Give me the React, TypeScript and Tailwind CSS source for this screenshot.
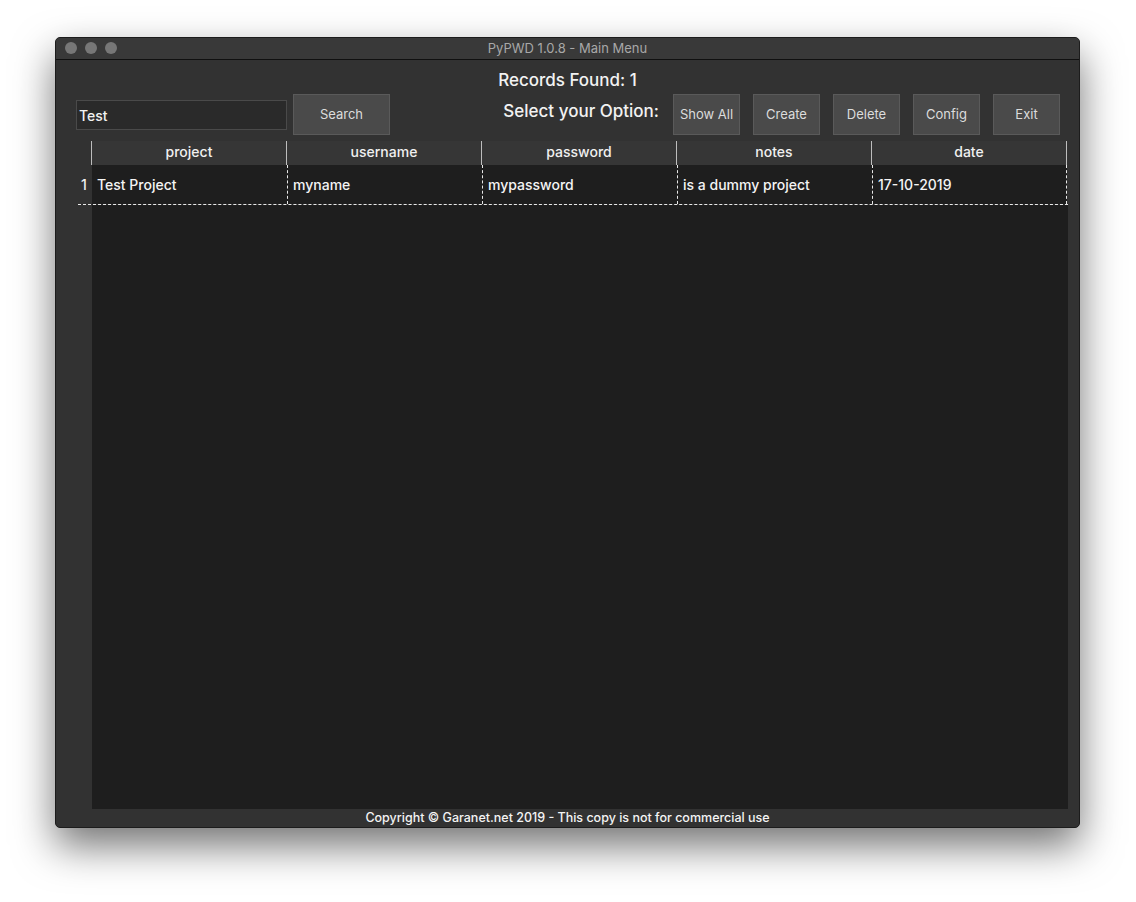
import React from "react";

const COLUMNS = ["project", "username", "password", "notes", "date"];
const ROW = ["Test Project", "myname", "mypassword", "is a dummy project", "17-10-2019"];
const OPTIONS = ["Show All", "Create", "Delete", "Config", "Exit"];

const font = { fontFamily: "Inter, 'Noto Sans', 'Liberation Sans', sans-serif" };

export default function App() {
  const btn =
    "flex h-[41px] items-center justify-center border border-[#5a5a5a] bg-[#4a4a4a] text-[13px] text-[#dcdcdc]";

  return (
    <div className="min-h-screen bg-white pl-[55px] pt-[37px]" style={font}>
      <div className="flex h-[791px] w-[1025px] flex-col overflow-hidden rounded-[5px] border border-[#1c1c1c] bg-[#323232] shadow-[0_18px_40px_rgba(0,0,0,0.55)]">
        {/* title bar */}
        <div className="relative flex h-[22px] shrink-0 items-center justify-center border-b border-[#101010] bg-[#393939]">
          <div className="absolute left-[9px] top-[4px] flex gap-[8px]">
            <span className="h-[12px] w-[12px] rounded-full bg-[#777777]" />
            <span className="h-[12px] w-[12px] rounded-full bg-[#777777]" />
            <span className="h-[12px] w-[12px] rounded-full bg-[#777777]" />
          </div>
          <span className="text-[13px] text-[#a8a8a8]">PyPWD 1.0.8 - Main Menu</span>
        </div>

        {/* records */}
        <div className="flex h-[34px] shrink-0 items-center justify-center pt-[8px] text-[17px] font-medium text-[#f2f2f2]">
          Records Found: 1
        </div>

        {/* controls */}
        <div className="flex h-[42px] shrink-0 items-start pl-[20px] pr-[19px]">
          <div className="mt-[6px] flex h-[30px] w-[211px] items-center border border-[#4a4a4a] bg-[#2a2a2a] pl-[2px] pt-[1px] text-[14px] font-medium text-[#f2f2f2]">
            Test
          </div>
          <div className={`${btn} ml-[6px] w-[97px]`}>Search</div>
          <div className="ml-auto mr-[14px] pt-[5px] text-[17px] font-medium text-[#f2f2f2]">
            Select your Option:
          </div>
          <div className="flex gap-[13px]">
            {OPTIONS.map((o) => (
              <div key={o} className={`${btn} w-[67px]`}>
                {o}
              </div>
            ))}
          </div>
        </div>

        {/* table */}
        <div className="ml-[22px] mt-[5px] flex w-[990px] flex-1 flex-col">
          <div className="flex h-[24px] shrink-0">
            <div className="w-[14px] border-r border-[#bdbdbd]" />
            {COLUMNS.map((c) => (
              <div
                key={c}
                className="flex w-[195px] items-center justify-center border-r border-[#bdbdbd] bg-[#363636] pb-[3px] text-[14px] font-medium text-[#f0f0f0]"
              >
                {c}
              </div>
            ))}
          </div>
          <div className="flex h-[40px] shrink-0 border-b border-dashed border-[#e8e8e8]">
            <div className="flex w-[14px] items-center pb-[1px] pl-[3px] text-[14px] font-medium text-[#f0f0f0]">1</div>
            {ROW.map((v, i) => (
              <div
                key={i}
                className={`flex w-[195px] items-center bg-[#1e1e1e] pb-[1px] pl-[5px] text-[14px] font-medium text-[#f4f4f4] ${
                  i === 0 ? "" : "border-l border-dashed border-[#e8e8e8]"
                } ${i === ROW.length - 1 ? "border-r border-dashed border-[#e8e8e8]" : ""}`}
              >
                {v}
              </div>
            ))}
          </div>
          <div className="flex flex-1">
            <div className="w-[14px]" />
            <div className="flex-1 bg-[#1e1e1e]" />
          </div>
        </div>

        {/* footer */}
        <div className="flex h-[18px] shrink-0 items-center justify-center text-[12.5px] font-medium text-[#f4f4f4]">
          Copyright © Garanet.net 2019 - This copy is not for commercial use
        </div>
      </div>
    </div>
  );
}
